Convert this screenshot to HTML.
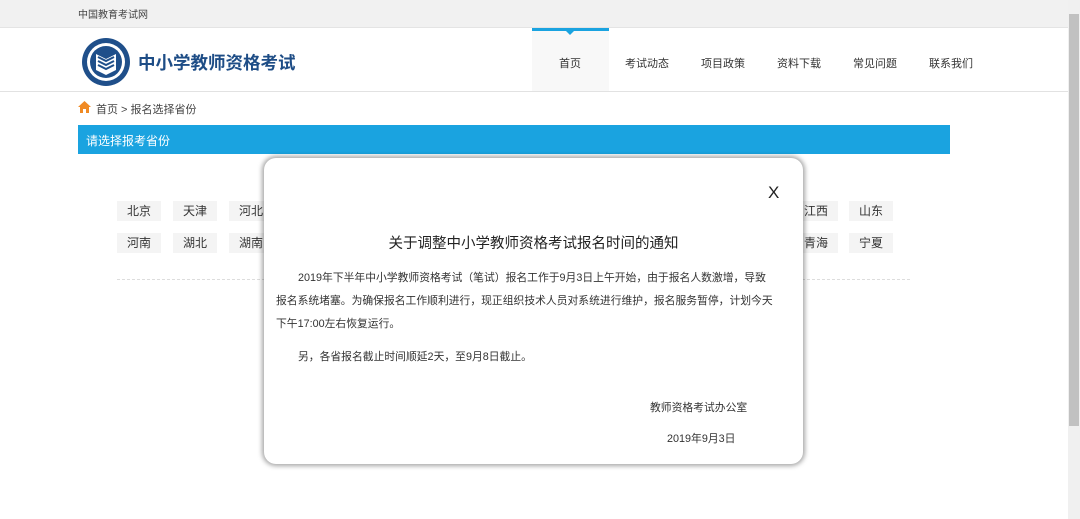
<!DOCTYPE html>
<html><head><meta charset="utf-8"><style>
*{margin:0;padding:0;box-sizing:border-box}
body{width:1080px;height:519px;overflow:hidden;background:#fff;font-family:"Liberation Sans","Microsoft YaHei","Noto Sans CJK SC",sans-serif;position:relative;color:#333}
.a{position:absolute;white-space:nowrap}
.top{left:0;top:0;width:1068px;height:28px;background:#f1f1f1;border-bottom:1px solid #e4e4e4}
.hdr{left:0;top:28px;width:1068px;height:64px;border-bottom:1px solid #e2e2e2}
.nav{font-size:11px;color:#333;top:55px}
.btn{background:#f4f4f4;font-size:12px;color:#333;width:44px;height:20px;line-height:20px;text-align:center}
.modal{left:264px;top:158px;width:539px;height:306px;background:#fff;border-radius:12px;box-shadow:0 0 5px 2px rgba(0,0,0,.35)}
.p{font-size:10.8px;color:#333;left:12px}
</style></head><body>
<div class="a top"></div>
<div class="a" style="left:78px;top:6px;font-size:10px;color:#444">中国教育考试网</div>
<div class="a hdr"></div>
<svg class="a" style="left:81px;top:37px" width="50" height="50" viewBox="0 0 50 50">
<circle cx="25" cy="25" r="24" fill="#1f4f8a"/><circle cx="25" cy="25" r="19" fill="#fff"/><circle cx="25" cy="25" r="16" fill="#1f4f8a"/>
<path d="M15 17 L25 22 L35 17 L35 33 L25 38 L15 33Z" fill="#fff"/>
<path d="M17 20 L25 24 L33 20 M17 24 L25 28 L33 24 M17 28 L25 32 L33 28" stroke="#1f4f8a" stroke-width="2" fill="none"/>
</svg>
<div class="a" style="left:138px;top:50px;font-size:17.5px;font-weight:bold;color:#1e4d86">中小学教师资格考试</div>
<div class="a" style="left:532px;top:28px;width:77px;height:63px;background:#f8f8f8;border-top:3px solid #1aa3e0"></div>
<div class="a" style="left:566px;top:31px;width:0;height:0;border-left:4px solid transparent;border-right:4px solid transparent;border-top:4px solid #1aa3e0"></div>
<div class="a nav" style="left:559px">首页</div>
<div class="a nav" style="left:625px">考试动态</div>
<div class="a nav" style="left:701px">项目政策</div>
<div class="a nav" style="left:777px">资料下载</div>
<div class="a nav" style="left:853px">常见问题</div>
<div class="a nav" style="left:929px">联系我们</div>
<svg class="a" style="left:78px;top:101px" width="13" height="12" viewBox="0 0 13 12"><path d="M6.5 0 L13 6 L11 6 L11 12 L8 12 L8 8 L5 8 L5 12 L2 12 L2 6 L0 6Z" fill="#f08a24"/></svg>
<div class="a" style="left:96px;top:101px;font-size:11px;color:#444">首页 &gt; 报名选择省份</div>
<div class="a" style="left:78px;top:125px;width:872px;height:29px;background:#1aa3e0"></div>
<div class="a" style="left:86px;top:132px;font-size:12px;color:#fff">请选择报考省份</div>
<div class="a btn" style="left:117px;top:201px">北京</div>
<div class="a btn" style="left:173px;top:201px">天津</div>
<div class="a btn" style="left:229px;top:201px">河北</div>
<div class="a btn" style="left:117px;top:233px">河南</div>
<div class="a btn" style="left:173px;top:233px">湖北</div>
<div class="a btn" style="left:229px;top:233px">湖南</div>
<div class="a btn" style="left:794px;top:201px">江西</div>
<div class="a btn" style="left:849px;top:201px">山东</div>
<div class="a btn" style="left:794px;top:233px">青海</div>
<div class="a btn" style="left:849px;top:233px">宁夏</div>
<div class="a" style="left:117px;top:279px;width:793px;border-top:1px dashed #ddd"></div>
<div class="a modal">
<div class="a" style="left:504px;top:25px;font-size:17px;color:#222">X</div>
<div class="a" style="left:0;width:539px;text-align:center;top:74px;font-size:14.5px;color:#222">关于调整中小学教师资格考试报名时间的通知</div>
<div class="a p" style="top:111px;left:34px">2019年下半年中小学教师资格考试（笔试）报名工作于9月3日上午开始，由于报名人数激增，导致</div>
<div class="a p" style="top:134px">报名系统堵塞。为确保报名工作顺利进行，现正组织技术人员对系统进行维护，报名服务暂停，计划今天</div>
<div class="a p" style="top:157px">下午17:00左右恢复运行。</div>
<div class="a p" style="top:190px;left:34px">另，各省报名截止时间顺延2天，至9月8日截止。</div>
<div class="a p" style="top:241px;left:386px">教师资格考试办公室</div>
<div class="a p" style="top:272px;left:403px">2019年9月3日</div>
</div>
<div class="a" style="left:1068px;top:0;width:12px;height:519px;background:#f0f0f0"></div>
<div class="a" style="left:1069px;top:14px;width:10px;height:412px;background:#c1c1c1"></div>
</body></html>
